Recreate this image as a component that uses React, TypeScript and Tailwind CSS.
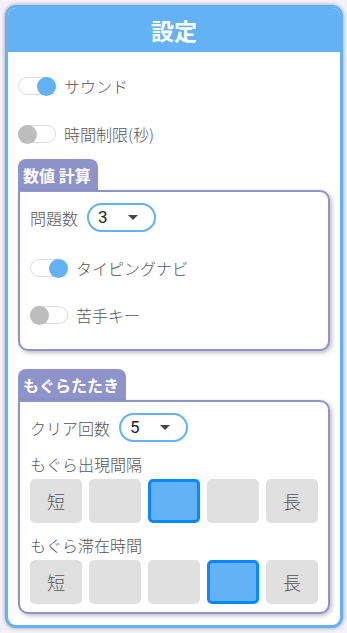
import { useState } from 'react';

const FONT = { fontFamily: '"Noto Sans CJK JP", "Noto Sans", Roboto, sans-serif' };

function Toggle({ on, label }: { on: boolean; label: string }) {
  return (
    <div className="flex items-center">
      <div className="relative w-[38px] h-[18px] rounded-full bg-white border border-[#dcdcdc]">
        <div
          className={`absolute top-[-1px] w-[19px] h-[19px] rounded-full ${
            on ? 'right-[-1px] bg-[#62b2f5]' : 'left-[-1px] bg-[#bdbdbd]'
          }`}
        />
      </div>
      <span className="ml-[8px] text-[16px] font-light leading-none text-[#555]">{label}</span>
    </div>
  );
}

function Select({ value }: { value: string }) {
  return (
    <div className="flex items-center justify-between w-[69px] h-[29px] rounded-full border-2 border-[#62b2f5] pl-[9px] pr-[16px]">
      <span className="text-[17px] leading-none text-[#222]" style={{ fontFamily: 'Roboto, sans-serif' }}>
        {value}
      </span>
      <span className="w-0 h-0 border-l-[5px] border-r-[5px] border-t-[5px] border-l-transparent border-r-transparent border-t-[#444]" />
    </div>
  );
}

function Section({ title, children }: { title: string; children: React.ReactNode }) {
  return (
    <div className="flex flex-col">
      <div className="self-start h-[31px] flex items-center pl-[5px] pr-[7px] bg-[#8e93c9] rounded-t-[8px]">
        <span className="text-white font-bold text-[16px] leading-none">{title}</span>
      </div>
      <div className="border-2 border-[#8e93c9] rounded-b-[10px] rounded-tr-[10px] bg-white shadow-[2px_2px_4px_rgba(0,0,0,0.25)] px-[10px]">
        {children}
      </div>
    </div>
  );
}

function Scale({ selected }: { selected: number }) {
  return (
    <div className="grid grid-cols-5 gap-[7px]">
      {[0, 1, 2, 3, 4].map((i) => (
        <div
          key={i}
          className={`h-[44px] rounded-[5px] flex items-center justify-center text-[18px] font-light text-[#555] ${
            i === selected ? 'bg-[#62b2f5] border-[3px] border-[#0a88ff]' : 'bg-[#e0e0e0]'
          }`}
        >
          {i === 0 ? '短' : i === 4 ? '長' : ''}
        </div>
      ))}
    </div>
  );
}

export default function App() {
  const [sound] = useState(true);

  return (
    <div className="min-h-[633px] bg-[#f5f1fa] pt-[5px] pl-[5px] pr-[4px] pb-[6px]" style={FONT}>
      <div className="rounded-[11px] border-[3px] border-[#62b2f5] bg-white overflow-hidden shadow-[0_0_4px_rgba(0,0,0,0.35)]">
        <div className="h-[44px] bg-[#62b2f5] flex items-center justify-center">
          <h1 className="text-white font-bold text-[23px] leading-none">設定</h1>
        </div>

        <div className="px-[10px] pt-[10px] pb-[11px]">
          <div className="h-[48px] flex items-center">
            <Toggle on={sound} label="サウンド" />
          </div>
          <div className="h-[48px] flex items-center">
            <Toggle on={false} label="時間制限(秒)" />
          </div>

          <div className="mt-[1px]">
            <Section title="数値 計算">
              <div className="pt-[11px] pb-[25px]">
                <div className="flex items-center gap-[9px]">
                  <span className="text-[16px] font-light leading-none text-[#555]">問題数</span>
                  <Select value="3" />
                </div>
                <div className="mt-[27px]">
                  <Toggle on={true} label="タイピングナビ" />
                </div>
                <div className="mt-[29px]">
                  <Toggle on={false} label="苦手キー" />
                </div>
              </div>
            </Section>
          </div>

          <div className="mt-[18px]">
            <Section title="もぐらたたき">
              <div className="pt-[11px] pb-[8px]">
                <div className="flex items-center gap-[9px]">
                  <span className="text-[16px] font-light leading-none text-[#555]">クリア回数</span>
                  <Select value="5" />
                </div>
                <div className="mt-[14px] text-[16px] font-light leading-none text-[#555]">もぐら出現間隔</div>
                <div className="mt-[7px]">
                  <Scale selected={2} />
                </div>
                <div className="mt-[14px] text-[16px] font-light leading-none text-[#555]">もぐら滞在時間</div>
                <div className="mt-[7px]">
                  <Scale selected={3} />
                </div>
              </div>
            </Section>
          </div>
        </div>
      </div>
    </div>
  );
}
